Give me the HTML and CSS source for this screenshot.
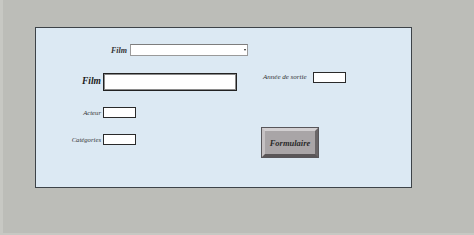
FILE: index.html
```html
<!DOCTYPE html>
<html lang="fr">
<head>
    <meta charset="UTF-8">
    <meta name="viewport" content="width=device-width, initial-scale=1.0">
    <title>Films</title>
    <link rel="stylesheet" href="styles.css">
</head>
<body>
    <div class="panel">
        <div class="top-row">
            <label class="label-film-small" for="filmList">Film</label>
            <div class="select-box">
                <select id="filmList"></select>
                <span class="select-arrow"></span>
            </div>
        </div>
        <form class="film-form">
            <label class="cell-label label-film" for="film">Film</label>
            <input type="text" id="film" class="input-film">
            <label class="label-year" for="annee">Année de sortie</label>
            <input type="text" id="annee" class="input-small input-year">

            <label class="cell-label label-small row-b" for="acteur">Acteur</label>
            <input type="text" id="acteur" class="input-small row-b">

            <label class="cell-label label-small row-c" for="categories">Catégories</label>
            <input type="text" id="categories" class="input-small row-c">
            <button type="button" class="btn-form">Formulaire</button>
        </form>
    </div>
</body>
</html>
```

FILE: styles.css
```css
html, body {
    margin: 0;
    padding: 0;
}
body {
    width: 474px;
    height: 235px;
    box-sizing: border-box;
    background-color: #bcbdb8;
    border-left: 3px solid #c7c8c3;
    border-bottom: 2px solid #c7c8c3;
    padding-top: 27px;
    padding-left: 32px;
    font-family: "Liberation Serif", "Times New Roman", serif;
    font-style: italic;
    color: #222;
    overflow: hidden;
}
.panel {
    width: 377px;
    height: 161px;
    box-sizing: border-box;
    background-color: #dce9f3;
    border: 1px solid #3d4348;
}
.top-row {
    display: flex;
    align-items: center;
    margin-top: 16px;
}
.label-film-small {
    width: 91px;
    text-align: right;
    font-size: 8px;
    font-weight: bold;
    color: #333;
    margin-right: 3px;
}
.select-box {
    position: relative;
    width: 118px;
    height: 12px;
}
.select-box select {
    -webkit-appearance: none;
    appearance: none;
    display: block;
    width: 100%;
    height: 100%;
    box-sizing: border-box;
    margin: 0;
    padding: 0;
    border: 1px solid #9a9a9a;
    border-top-color: #7d7d7d;
    background: #fff;
}
.select-arrow {
    position: absolute;
    right: 2px;
    top: 5px;
    width: 0;
    height: 0;
    border-left: 1.5px solid transparent;
    border-right: 1.5px solid transparent;
    border-top: 2px solid #222;
}
.film-form {
    display: grid;
    grid-template-columns: 67px 160px 50px auto;
    grid-template-rows: 35px 21px 29px;
    margin: 16px 0 0;
    align-items: start;
}
.cell-label {
    grid-column: 1;
    text-align: right;
    padding-right: 2px;
}
.label-film {
    font-size: 9.5px;
    font-weight: bold;
    line-height: 19px;
    color: #1a1a1a;
}
.label-small {
    font-size: 6.7px;
    line-height: 11px;
    color: #333;
}
.input-film {
    grid-column: 2;
    width: 134px;
    height: 18px;
    margin: 1px 0 0;
    box-sizing: border-box;
    border: 1px solid #222;
    box-shadow: inset 0 0 0 1px #8a8a8a;
    background: #fff;
    padding: 0;
}
.label-year {
    grid-column: 3;
    grid-row: 1;
    font-size: 7px;
    line-height: 11px;
    color: #333;
    white-space: nowrap;
}
.input-small {
    grid-column: 2;
    width: 33px;
    height: 11px;
    margin: 0;
    padding: 0;
    box-sizing: border-box;
    border: 1px solid #2a2a2a;
    background: #fff;
}
.input-year {
    grid-column: 4;
    grid-row: 1;
}
.row-b {
    grid-row: 2;
}
.row-c {
    grid-row: 3;
    margin-top: 6px;
}
.btn-form {
    grid-column: 3 / 5;
    grid-row: 3;
    margin-left: -1px;
    width: 56px;
    height: 29px;
    box-sizing: border-box;
    padding: 0;
    background-color: #a9a5a7;
    border: 3px solid;
    border-color: #d2cfd1 #6a6668 #5a5658 #c5c1c3;
    box-shadow: 0 0 0 1px #58565a;
    font-family: "Liberation Serif", "Times New Roman", serif;
    font-style: italic;
    font-weight: bold;
    font-size: 8.5px;
    color: #2a2a2a;
}
```
